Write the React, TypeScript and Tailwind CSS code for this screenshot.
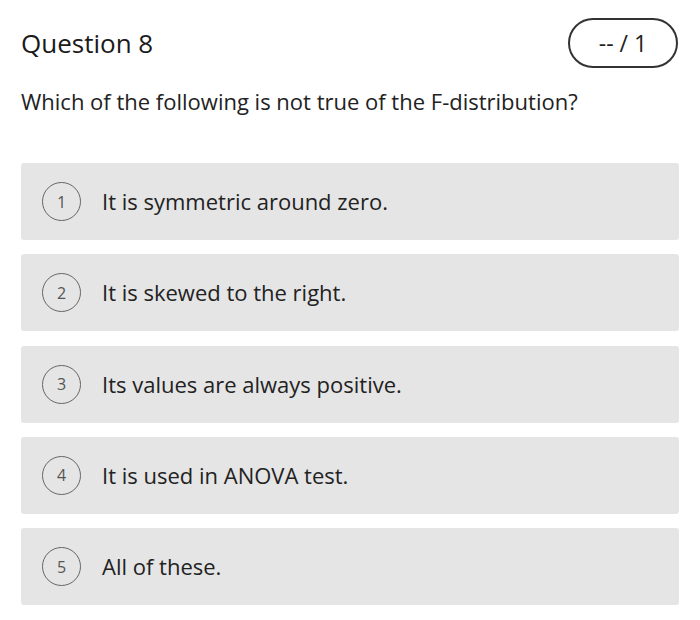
const options = [
  "It is symmetric around zero.",
  "It is skewed to the right.",
  "Its values are always positive.",
  "It is used in ANOVA test.",
  "All of these.",
];

export default function App() {
  return (
    <div className="w-[700px] h-[620px] bg-white text-[#222] font-['Open_Sans',sans-serif]">
      <div className="flex items-center justify-between pl-[21px] pr-[22px] pt-[18px]">
        <h1 className="text-[26px] leading-[50px] text-[#1a1a1a]">Question 8</h1>
        <div className="w-[110px] h-[50px] rounded-full border-2 border-[#333] flex items-center justify-center text-[23px] text-[#222]">
          -- / 1
        </div>
      </div>
      <p className="px-[21px] mt-[18px] text-[22px] leading-[30px] text-[#222]">
        Which of the following is not true of the F-distribution?
      </p>
      <div className="flex flex-col gap-[14.25px] px-[21px] mt-[47px]">
        {options.map((text, i) => (
          <div key={i} className="h-[77px] rounded-[3px] bg-[#e5e5e5] flex items-center pl-[21px]">
            <div className="w-[39px] h-[39px] shrink-0 rounded-full border-[1.5px] border-[#666] flex items-center justify-center text-[16px] text-[#555]">
              {i + 1}
            </div>
            <span className="ml-[21px] text-[22px] text-[#222]">{text}</span>
          </div>
        ))}
      </div>
    </div>
  );
}
